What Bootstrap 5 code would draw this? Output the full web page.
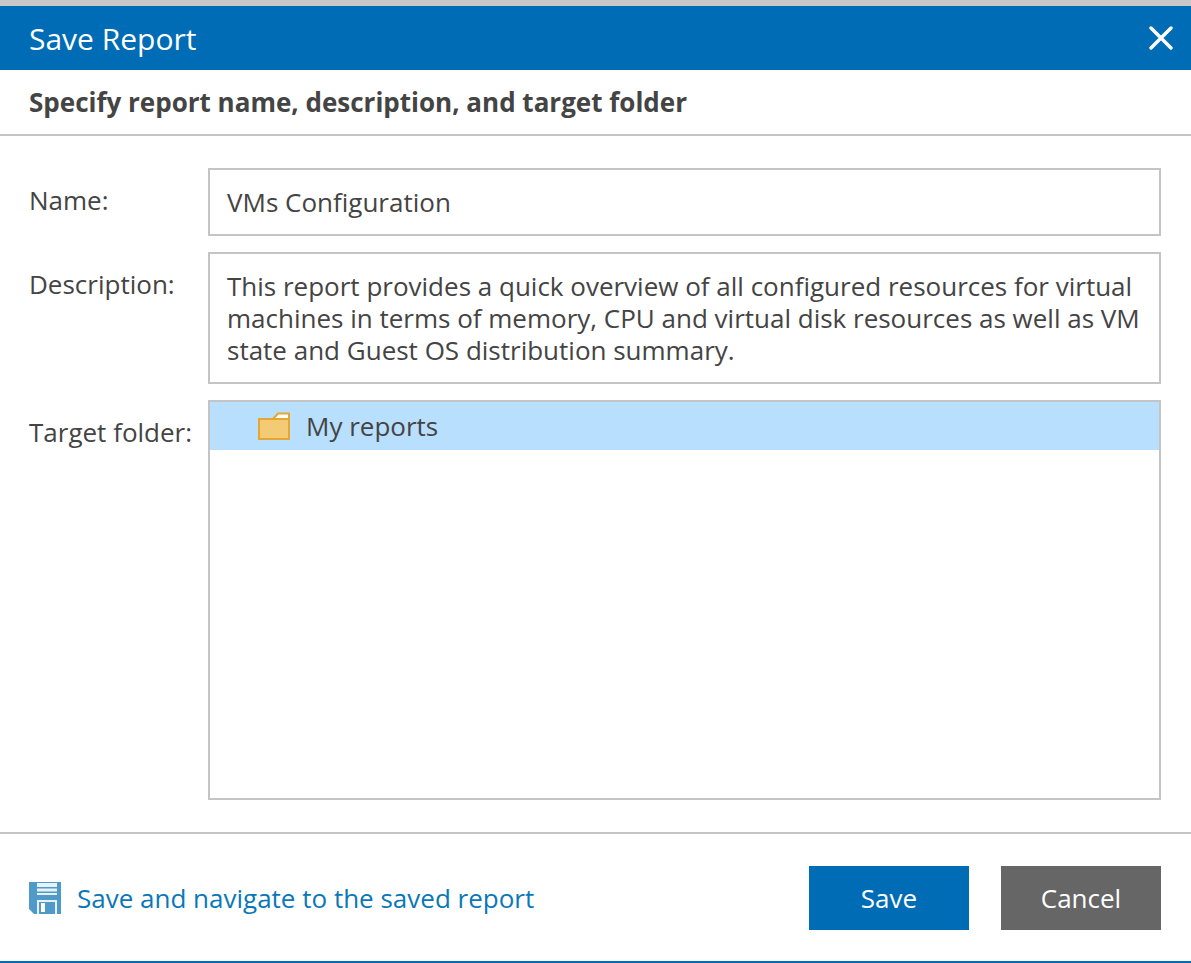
<!DOCTYPE html>
<html lang="en">
<head>
<meta charset="utf-8">
<title>Save Report</title>
<link rel="stylesheet" href="https://cdn.jsdelivr.net/npm/bootstrap@5.3.0/dist/css/bootstrap.min.css">
<style>
html,body{height:963px;overflow:hidden}
body{font-family:"Open Sans",sans-serif;font-size:26px;line-height:32px;color:#444;background:#fff}
.dlg{height:963px;border-top:6px solid #c8c8c8;border-bottom:2px solid #006cb5}
.dlg-head{height:64px;background:#006cb5;color:#fff;padding:0 29px;font-size:30px}
.dlg-title{padding-top:2px}
.dlg-x{width:24px;height:24px;padding:0;border:0;background:none;margin-right:-11px;display:block}
.dlg-sub{height:66px;padding:0 29px;border-bottom:2px solid #c4c4c4;font-weight:700;font-size:26px}
.dlg-form{padding:32px 30px 32px 29px;height:698px;border-bottom:2px solid #c4c4c4}
.lbl{width:179px;flex:none}
.box{border:2px solid #c4c4c4;padding:16px 16px 16px 17px}
.name-box{height:68px}
.desc-box{height:132px}
.tree-box{height:400px;padding:0}
.tree-row{height:48px;background:#b8dffd;padding-left:48px;gap:16px}
.dlg-foot{height:127px;padding:0 30px 0 29px}
.save-link{color:#0a78b8;text-decoration:none}
.act-gap{gap:32px}
.act{width:160px;height:64px;border:0;border-radius:0;color:#fff;font-size:26px;padding:2px 0 0}
.act-save{background:#006cb5}
.act-cancel{background:#666}
.act:hover{color:#fff}
.act-save:hover{background:#006cb5}
.act-cancel:hover{background:#666}
</style>
</head>
<body>
<div class="dlg d-flex flex-column">
  <div class="dlg-head d-flex align-items-center justify-content-between">
    <span class="dlg-title">Save Report</span>
    <button class="dlg-x" type="button" aria-label="Close"><svg class="d-block" width="24" height="24" viewBox="0 0 24 24"><path d="M2 2L22 22M22 2L2 22" stroke="#fff" stroke-width="3.4" stroke-linecap="round"/></svg></button>
  </div>
  <div class="dlg-sub d-flex align-items-center">Specify report name, description, and target folder</div>
  <div class="dlg-form d-flex flex-column gap-3">
    <div class="d-flex">
      <div class="lbl pt-3">Name:</div>
      <div class="box name-box flex-grow-1">VMs Configuration</div>
    </div>
    <div class="d-flex">
      <div class="lbl pt-3">Description:</div>
      <div class="box desc-box flex-grow-1">This report provides a quick overview of all configured resources for virtual machines in terms of memory, CPU and virtual disk resources as well as VM state and Guest OS distribution summary.</div>
    </div>
    <div class="d-flex">
      <div class="lbl pt-3">Target folder:</div>
      <div class="box tree-box flex-grow-1">
        <div class="tree-row d-flex align-items-center">
          <svg width="32" height="28" viewBox="0 0 32 28"><path d="M15 7L20 1.5H31V7Z" fill="#fff" stroke="#e5a731" stroke-width="2"/><path d="M1 7H31V27H1Z" fill="#f2cb74" stroke="#e5a731" stroke-width="2"/></svg>
          <span>My reports</span>
        </div>
      </div>
    </div>
  </div>
  <div class="dlg-foot d-flex align-items-center justify-content-between">
    <a class="save-link d-flex align-items-center gap-3" href="#">
      <svg width="32" height="32" viewBox="0 0 32 32"><path d="M0 0H32V32H5L0 27Z" fill="#4f9ac9"/><path d="M8 1H28V13H8Z" fill="#e6f1f8"/><path d="M8 5H28V6.5H8ZM8 9.5H28V11H8Z" fill="#4f9ac9"/><path d="M8 18H28V32H8Z" fill="#e6f1f8"/><path d="M10 20H26V32H10Z" fill="#4f9ac9"/><path d="M12 21H16V30H12Z" fill="#fff"/></svg>
      <span>Save and navigate to the saved report</span>
    </a>
    <div class="d-flex act-gap">
      <button class="btn act act-save" type="button">Save</button>
      <button class="btn act act-cancel" type="button">Cancel</button>
    </div>
  </div>
</div>
</body>
</html>
